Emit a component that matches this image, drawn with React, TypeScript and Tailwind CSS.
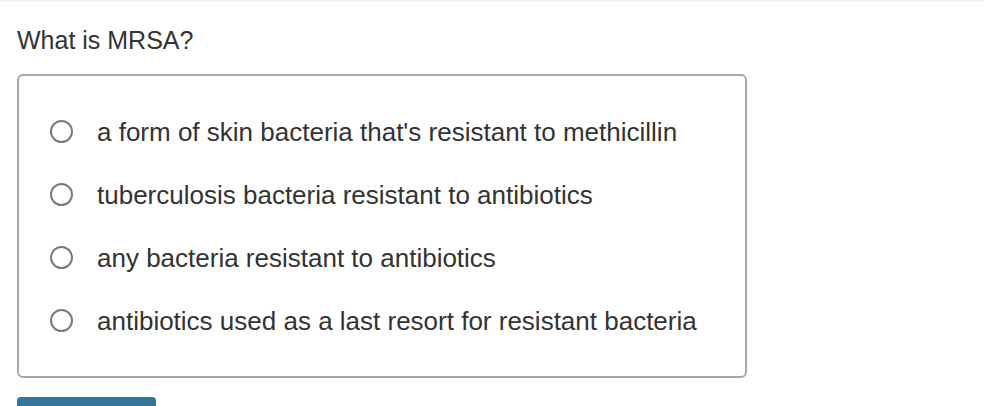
const options = [
  "a form of skin bacteria that's resistant to methicillin",
  "tuberculosis bacteria resistant to antibiotics",
  "any bacteria resistant to antibiotics",
  "antibiotics used as a last resort for resistant bacteria",
]

export default function App() {
  return (
    <div className="min-h-screen bg-white text-[#333] font-['Liberation_Sans',Arial,sans-serif]">
      <div className="h-[2px] bg-[#f4f4f4]" />
      <div className="pl-[17px]">
        <h1 className="mt-[23px] text-[25px] leading-[30px] font-normal">What is MRSA?</h1>
        <div className="mt-[19px] w-[730px] rounded-[6px] border-2 border-[#a8a8a8] pt-[24px] pb-[24px] pl-[31px]">
          {options.map((opt) => (
            <label key={opt} className="flex h-[63px] items-center gap-[24px]">
              <span className="h-[23px] w-[23px] shrink-0 rounded-full border-2 border-[#7a7a7a] bg-white" />
              <span className="text-[26px] leading-[30px]">{opt}</span>
            </label>
          ))}
        </div>
        <button className="mt-[19px] h-[40px] w-[139px] rounded-[4px] bg-[#35759a]" />
      </div>
    </div>
  )
}
